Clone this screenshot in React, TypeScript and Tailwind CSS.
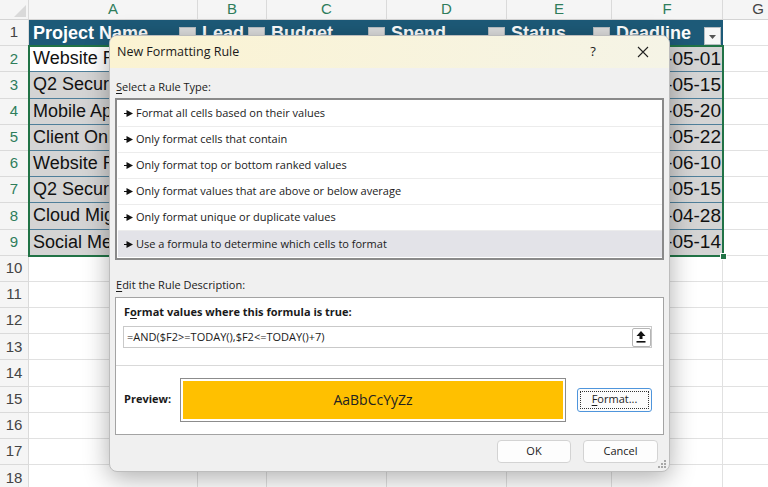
import React from "react";

const COLS = [
  { key: "A", w: "w-[169px]" },
  { key: "B", w: "w-[69px]" },
  { key: "C", w: "w-[120px]" },
  { key: "D", w: "w-[120px]" },
  { key: "E", w: "w-[105px]" },
  { key: "F", w: "w-[111px]" },
];

const HEADERS = ["Project Name", "Lead", "Budget", "Spend", "Status", "Deadline"];

const DATA = [
  ["Website Redesign", "Sarah", "$12,000", "$9,800", "On Track", "2025-05-01"],
  ["Q2 Security Audit", "Mike", "$8,500", "$8,900", "At Risk", "2025-05-15"],
  ["Mobile App Launch", "Priya", "$25,000", "$18,400", "On Track", "2025-05-20"],
  ["Client Onboarding", "James", "$4,000", "$3,100", "Done", "2025-05-22"],
  ["Website Refresh", "Sarah", "$6,500", "$2,200", "Planned", "2025-06-10"],
  ["Q2 Security Review", "Mike", "$3,000", "$1,700", "On Track", "2025-05-15"],
  ["Cloud Migration", "Lena", "$40,000", "$41,200", "Delayed", "2025-04-28"],
  ["Social Media Push", "Ana", "$7,500", "$5,600", "On Track", "2025-05-14"],
];

const RULES = [
  "Format all cells based on their values",
  "Only format cells that contain",
  "Only format top or bottom ranked values",
  "Only format values that are above or below average",
  "Only format unique or duplicate values",
  "Use a formula to determine which cells to format",
];

function Pointer() {
  return (
    <svg width="9" height="7" viewBox="0 0 9 7" className="shrink-0">
      <rect x="0" y="3" width="3" height="1" fill="#111" />
      <polygon points="2.5,0 9,3.5 2.5,7" fill="#111" />
    </svg>
  );
}

function SheetRow({ n }: { n: number }) {
  const sel = n >= 2 && n <= 9;
  const head = n === 1;
  const data = sel ? DATA[n - 2] : null;
  return (
    <div className="flex h-[26.2px]">
      <div
        className={`w-[29px] shrink-0 flex items-center justify-center bg-[#f5f5f5] border-r border-b border-[#dadada] text-[15px] ${
          sel ? "text-[#2e7d5b]" : "text-[#444]"
        }`}
      >
        {n}
      </div>
      {COLS.map((c, i) => {
        if (head) {
          return (
            <div key={c.key} className={`${c.w} shrink-0 relative flex items-center pl-[4px] bg-[#1d5a78] text-white font-bold text-[18px] overflow-hidden whitespace-nowrap`}>
              {HEADERS[i]}
              <div
                className={`absolute right-[2px] top-[7px] w-[17px] h-[18px] border border-[#b7bec2] flex items-center justify-center ${
                  i === 5 ? "bg-[#f7f7f7]" : "bg-[#dedede]"
                }`}
              >
                <svg width="7" height="4" viewBox="0 0 7 4" className="mt-[1px]">
                  <polygon points="0,0 7,0 3.5,4" fill="#555" />
                </svg>
              </div>
            </div>
          );
        }
        if (data) {
          const active = n === 2 && i === 0;
          return (
            <div
              key={c.key}
              className={`${c.w} shrink-0 flex items-center text-[#111] border-b border-[#4f7f9a] overflow-hidden whitespace-nowrap ${
                active ? "bg-white" : "bg-[#d4d4d4]"
              } ${i === 5 ? "justify-end px-[2px] text-[19px]" : "px-[4px] text-[18px]"}`}
            >
              {data[i]}
            </div>
          );
        }
        return <div key={c.key} className={`${c.w} shrink-0 border-r border-b border-[#e1e1e1] bg-white`} />;
      })}
      <div className="flex-1 border-b border-[#e1e1e1] bg-white" />
    </div>
  );
}

function Dialog() {
  return (
    <div className="absolute left-[109px] top-[35px] w-[561px] h-[437px] rounded-[8px] border border-[#bdbdbd] bg-[#f0f0f0] shadow-[0_6px_26px_rgba(0,0,0,0.32)] overflow-hidden font-['Open_Sans',sans-serif] text-[11px] text-[#1a1a1a]">
      {/* Title bar */}
      <div className="h-[32px] flex items-center bg-gradient-to-r from-[#fbf3d2] to-[#f5f4e6]">
        <span className="pl-[7px] text-[12.5px]">New Formatting Rule</span>
        <div className="ml-auto flex items-center">
          <div className="w-[50px] flex justify-center text-[13px]">?</div>
          <div className="w-[50px] flex justify-center">
            <svg width="12" height="12" viewBox="0 0 12 12">
              <path d="M1 1L11 11M11 1L1 11" stroke="#222" strokeWidth="1.1" />
            </svg>
          </div>
          <div className="w-[1px]" />
        </div>
      </div>

      <div className="px-[5px]">
        <div className="h-[30px] pt-[11px] pl-[1px] leading-[16px]">
          <span className="underline underline-offset-2">S</span>elect a Rule Type:
        </div>

        {/* Rule list */}
        <div className="h-[162px] border-2 border-[#8a8a8a] bg-white pl-[1px] pt-[1px]">
          {RULES.map((r, i) => (
            <div
              key={r}
              className={`h-[26px] flex items-center gap-[3px] pl-[6px] ${
                i < 5 ? "border-b border-[#ececec]" : ""
              } ${i === 5 ? "bg-[#e3e3e8]" : ""}`}
            >
              <Pointer />
              <span>{r}</span>
            </div>
          ))}
        </div>

        <div className="h-[37px] pt-[17px] pl-[1px] leading-[16px]">
          <span className="underline underline-offset-2">E</span>dit the Rule Description:
        </div>

        {/* Description box */}
        <div className="h-[138px] border border-[#a3a3a3] bg-white">
          <div className="pt-[6px] pl-[8px] leading-[16px] font-bold">
            F<span className="underline underline-offset-2">o</span>rmat values where this formula is true:
          </div>
          <div className="mt-[6px] ml-[7px] mr-[11px] h-[22px] border border-[#c9c9c9] flex items-center pl-[3px]">
            <span>=AND($F2&gt;=TODAY(),$F2&lt;=TODAY()+7)</span>
            <div className="ml-auto w-[20px] h-[20px] bg-white flex items-center justify-center">
              <div className="w-[19px] h-[19px] border border-[#b5b5b5] rounded-[2px] flex items-center justify-center">
                <svg width="10" height="12" viewBox="0 0 10 12">
                  <polygon points="5,0 0.5,5 3.5,5 3.5,8 6.5,8 6.5,5 9.5,5" fill="#111" />
                  <rect x="0.5" y="10" width="9" height="1.6" fill="#111" />
                </svg>
              </div>
            </div>
          </div>
          <div className="mt-[17px] h-[1px] bg-[#d9d9d9]" />
          <div className="h-[67px] flex items-center pl-[8px]">
            <span className="font-bold w-[56px]">Preview:</span>
            <div className="w-[386px] h-[44px] border border-[#8c8c8c] p-[2px] bg-white">
              <div className="w-full h-full bg-[#ffc000] flex items-center justify-center text-[14px] text-[#222]">
                AaBbCcYyZz
              </div>
            </div>
            <div className="ml-[11px] w-[75px] h-[24px] rounded-[3px] border border-[#4f95dc] bg-[#fcfcfc] p-[2px]">
              <div className="w-full h-full border border-dotted border-[#333] flex items-center justify-center">
                <span>
                  <span className="underline underline-offset-2">F</span>ormat...
                </span>
              </div>
            </div>
          </div>
        </div>

        {/* Buttons */}
        <div className="mt-[5px] flex justify-end gap-[12px] pr-[6px]">
          <div className="w-[74px] h-[23px] rounded-[4px] border border-[#d3d3d3] bg-[#fdfdfd] flex items-center justify-center">
            OK
          </div>
          <div className="w-[75px] h-[23px] rounded-[4px] border border-[#d3d3d3] bg-[#fdfdfd] flex items-center justify-center">
            Cancel
          </div>
        </div>
      </div>

      {/* resize grip */}
      <svg className="absolute right-[3px] bottom-[3px]" width="8" height="8" viewBox="0 0 8 8">
        <rect x="6" y="0" width="2" height="2" fill="#a8a8a8" />
        <rect x="3" y="3" width="2" height="2" fill="#a8a8a8" />
        <rect x="6" y="3" width="2" height="2" fill="#a8a8a8" />
        <rect x="0" y="6" width="2" height="2" fill="#a8a8a8" />
        <rect x="3" y="6" width="2" height="2" fill="#a8a8a8" />
        <rect x="6" y="6" width="2" height="2" fill="#a8a8a8" />
      </svg>
    </div>
  );
}

export default function App() {
  const rows = Array.from({ length: 18 }, (_, i) => i + 1);
  return (
    <div className="relative w-[768px] h-[487px] overflow-hidden bg-white font-['Liberation_Sans',Arial,sans-serif]">
      {/* Column headers */}
      <div className="flex h-[20px] bg-[#f5f5f5] border-b border-[#d4d4d4]">
        <div className="w-[29px] shrink-0 border-r border-[#dadada] relative">
          <svg className="absolute left-0 top-0" width="29" height="20" viewBox="0 0 29 20">
            <polygon points="26,5 26,17 14,17" fill="#d9d9d9" />
          </svg>
        </div>
        {COLS.map((c) => (
          <div key={c.key} className={`${c.w} shrink-0 border-r border-[#dadada] flex items-center justify-center text-[15px] text-[#2e7d5b]`}>
            {c.key}
          </div>
        ))}
        <div className="flex-1 flex items-center text-[15px] text-[#444]">
          <span className="w-[70px] text-center">G</span>
        </div>
      </div>

      {rows.map((n) => (
        <SheetRow key={n} n={n} />
      ))}

      {/* selection outline */}
      <div className="absolute left-[28px] top-[45px] w-[696px] h-[212px] border-2 border-[#217346]" />
      <div className="absolute left-[720px] top-[253px] w-[7px] h-[7px] bg-[#217346] border border-white" />

      <Dialog />
    </div>
  );
}
